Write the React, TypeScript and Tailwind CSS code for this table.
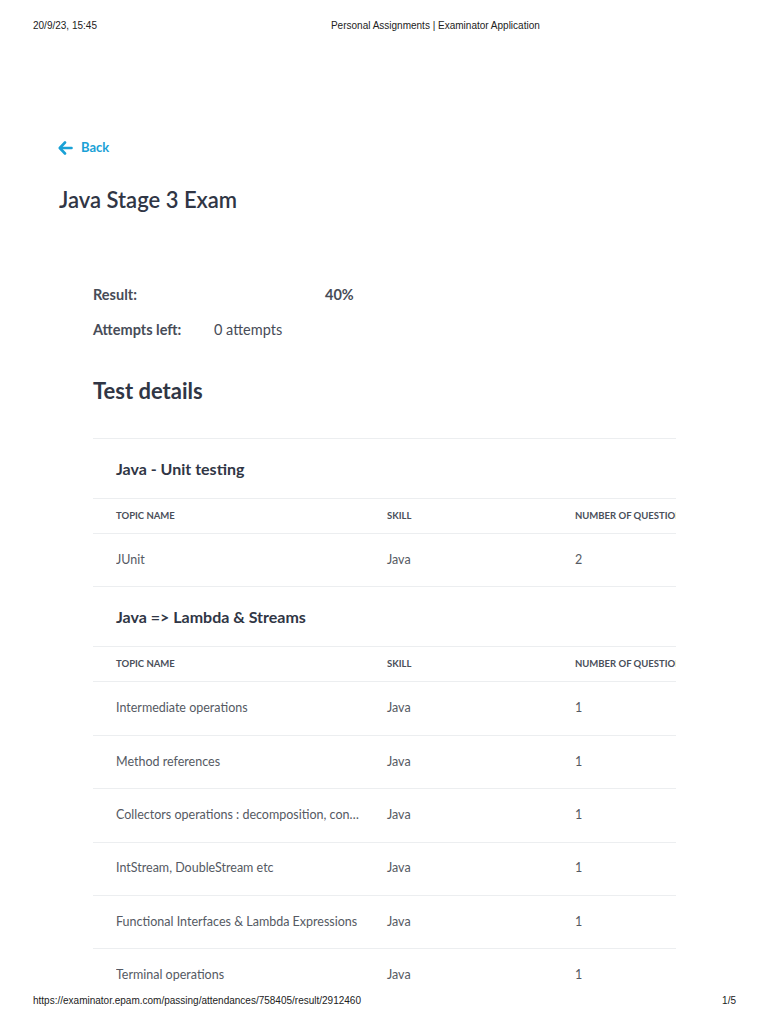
import React from "react";

const font = { fontFamily: "'Lato', 'Open Sans', sans-serif" };

type Row = { topic: string; skill: string; count: number };

const sections: { title: string; rows: Row[] }[] = [
  {
    title: "Java - Unit testing",
    rows: [{ topic: "JUnit", skill: "Java", count: 2 }],
  },
  {
    title: "Java => Lambda & Streams",
    rows: [
      { topic: "Intermediate operations", skill: "Java", count: 1 },
      { topic: "Method references", skill: "Java", count: 1 },
      { topic: "Collectors operations : decomposition, concatenation", skill: "Java", count: 1 },
      { topic: "IntStream, DoubleStream etc", skill: "Java", count: 1 },
      { topic: "Functional Interfaces & Lambda Expressions", skill: "Java", count: 1 },
      { topic: "Terminal operations", skill: "Java", count: 1 },
    ],
  },
];

function Section({ title, rows }: { title: string; rows: Row[] }) {
  return (
    <div className="w-[700px]">
      <div className="flex h-[60px] items-center border-b border-[#eceef0] pl-[23px] text-[16px] font-bold text-[#303645]">
        {title}
      </div>
      <div className="flex h-[35px] items-center border-b border-[#eceef0] pl-[23px] text-[9.5px] font-bold text-[#4a4f5a]">
        <div className="w-[271px]">TOPIC NAME</div>
        <div className="w-[188px]">SKILL</div>
        <div className="whitespace-nowrap">NUMBER OF QUESTIONS</div>
      </div>
      {rows.map((r) => (
        <div
          key={r.topic}
          className="flex h-[53.4px] items-center border-b border-[#eceef0] pl-[23px] text-[12.5px] text-[#555a63]"
        >
          <div className="w-[271px] truncate pr-[25px]">{r.topic}</div>
          <div className="w-[188px]">{r.skill}</div>
          <div>{r.count}</div>
        </div>
      ))}
    </div>
  );
}

export default function App() {
  return (
    <div className="relative h-[1024px] w-[768px] overflow-hidden bg-white">
      <div
        className="flex h-[50px] items-start pt-[18px] pl-[33px] text-[10px] text-[#222]"
        style={{ fontFamily: "'Liberation Sans', Arial, sans-serif" }}
      >
        <span>20/9/23, 15:45</span>
        <span className="ml-[234px]">Personal Assignments | Examinator Application</span>
      </div>

      <div style={font}>
        <div className="mt-[88px] flex items-center gap-[8px] pl-[58px] text-[13px] font-bold text-[#19a1d6]">
          <svg width="15" height="14" viewBox="0 0 15 14" fill="none">
            <path d="M7 1.5 L1.8 7 L7 12.5" stroke="#19a1d6" strokeWidth="2.6" strokeLinecap="round" strokeLinejoin="round" />
            <path d="M2.5 7 H13.5" stroke="#19a1d6" strokeWidth="2.6" strokeLinecap="round" />
          </svg>
          <span>Back</span>
        </div>

        <h1 className="mt-[25px] pl-[59px] text-[22px] font-semibold text-[#303645]">Java Stage 3 Exam</h1>

        <div className="mt-[68px] pl-[93px] text-[14.5px]">
          <div className="flex items-center">
            <span className="w-[232px] font-bold text-[#474c57]">Result:</span>
            <span className="font-bold text-[#474c57]">40%</span>
          </div>
          <div className="mt-[14px] flex items-center">
            <span className="w-[121px] font-bold text-[#474c57]">Attempts left:</span>
            <span className="text-[#474c57]">0 attempts</span>
          </div>
        </div>

        <h2 className="mt-[33px] pl-[93px] text-[22px] font-bold text-[#303645]">Test details</h2>

        <div className="ml-[93px] mt-[31px] w-[583px] overflow-hidden border-t border-[#eceef0]">
          {sections.map((s) => (
            <Section key={s.title} title={s.title} rows={s.rows} />
          ))}
        </div>
      </div>

      <div
        className="absolute bottom-0 left-0 flex h-[34px] w-full items-start justify-between bg-white pl-[33px] pr-[32px] pt-[3px] text-[10px] text-[#222]"
        style={{ fontFamily: "'Liberation Sans', Arial, sans-serif" }}
      >
        <span>https://examinator.epam.com/passing/attendances/758405/result/2912460</span>
        <span>1/5</span>
      </div>
    </div>
  );
}
